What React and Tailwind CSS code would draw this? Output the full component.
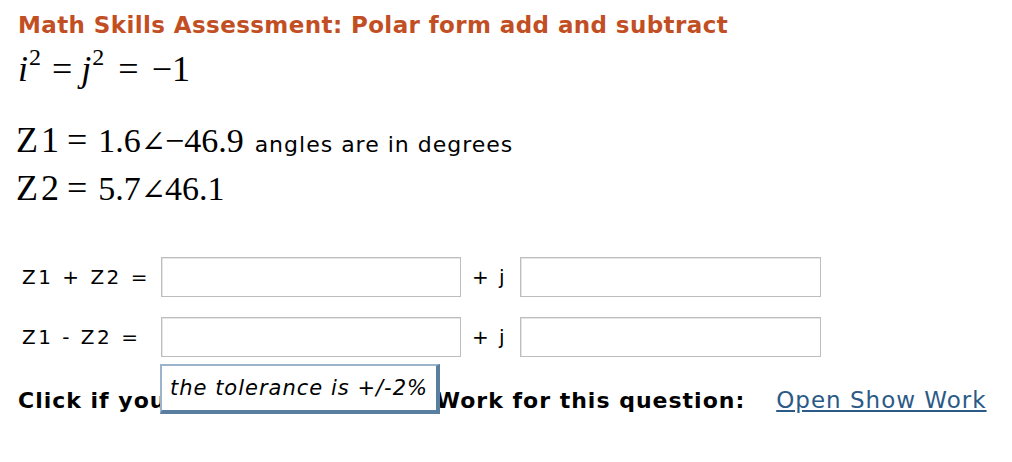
import React from "react";

const sans = "font-['DejaVu_Sans',Verdana,sans-serif]";
const serif = "font-['Liberation_Serif','Times_New_Roman',serif]";
const angle = "font-['DejaVu_Serif',serif] text-[30px]";

function AnswerRow({ label }) {
  return (
    <div className="flex items-center h-10">
      <span className={`${sans} text-[20px] tracking-[2.5px] text-black w-[139px] whitespace-pre`}>{label}</span>
      <input
        type="text"
        className="w-[300px] h-10 bg-white border border-[#bdbdbd] shadow-[inset_1px_1px_0_#e6e6e6] outline-none"
      />
      <span className={`${sans} text-[20px] tracking-[2px] text-black w-[59px] pl-[11px] whitespace-pre`}>+ j</span>
      <input
        type="text"
        className="w-[301px] h-10 bg-white border border-[#bdbdbd] shadow-[inset_1px_1px_0_#e6e6e6] outline-none"
      />
    </div>
  );
}

function Polar({ name, mag, ang }) {
  return (
    <div className="-ml-[2px] flex items-baseline h-[44px]">
      <span className={`${serif} text-[36px] tracking-[3px]`}>{name}</span>
      <span className={`${serif} text-[36px] ml-[5px]`}>=</span>
      <span className={`${serif} text-[34px] ml-[11px]`}>{mag}</span>
      <span className={angle}>∠</span>
      <span className={`${serif} text-[34px] -ml-[1px]`}>{ang}</span>
    </div>
  );
}

export default function App() {
  return (
    <div className="w-[1012px] h-[462px] bg-white pl-[18px] pt-[12px] text-black">
      {/* title */}
      <h1 className={`${sans} font-bold text-[23px] tracking-[0.4px] leading-[26px] text-[#c24f24]`}>
        Math Skills Assessment: Polar form add and subtract
      </h1>

      {/* i^2 = j^2 = -1 */}
      <div className={`${serif} text-[36px] leading-[44px] mt-[9px] whitespace-nowrap`}>
        <i>i</i><sup className="text-[24px] top-[-0.65em] ml-[1px]">2</sup><span className="ml-[11px]">=</span><i className="ml-[9px]">j</i><sup className="text-[24px] top-[-0.65em] ml-[1px]">2</sup><span className="ml-[14px]">=</span><span className="ml-[13px]">−1</span>
      </div>

      {/* given values */}
      <div className="mt-[22px] flex items-baseline">
        <Polar name="Z1" mag="1.6" ang="−46.9" />
        <span className={`${sans} text-[22px] tracking-[1px] ml-[11px]`}>angles are in degrees</span>
      </div>
      <div>
        <Polar name="Z2" mag="5.7" ang="46.1" />
      </div>

      {/* answers */}
      <div className="mt-[52px] pl-[4px] flex flex-col gap-5">
        <AnswerRow label="Z1 + Z2 =" />
        <AnswerRow label="Z1 - Z2 =" />
      </div>

      {/* show work */}
      <div className="relative mt-[23px] h-[40px] flex items-center">
        <span className={`${sans} font-bold text-[22px] tracking-[1px] whitespace-pre`}>
          Click if you would like to Show Work for this question:
        </span>
        <a href="#" className={`${sans} text-[23px] tracking-[1px] text-[#2b5a87] underline ml-[31px]`}>
          Open Show Work
        </a>
        <div className="absolute left-[142px] top-[-16px] w-[280px] h-[50px] bg-white border-t-2 border-l-2 border-r-4 border-b-4 border-t-[#9bb4cb] border-l-[#9bb4cb] border-r-[#5a7ea0] border-b-[#5a7ea0] pl-[8px] pt-[7px]">
          <span className={`${sans} italic text-[21px] tracking-[1px]`}>the tolerance is +/-2%</span>
        </div>
      </div>
    </div>
  );
}
